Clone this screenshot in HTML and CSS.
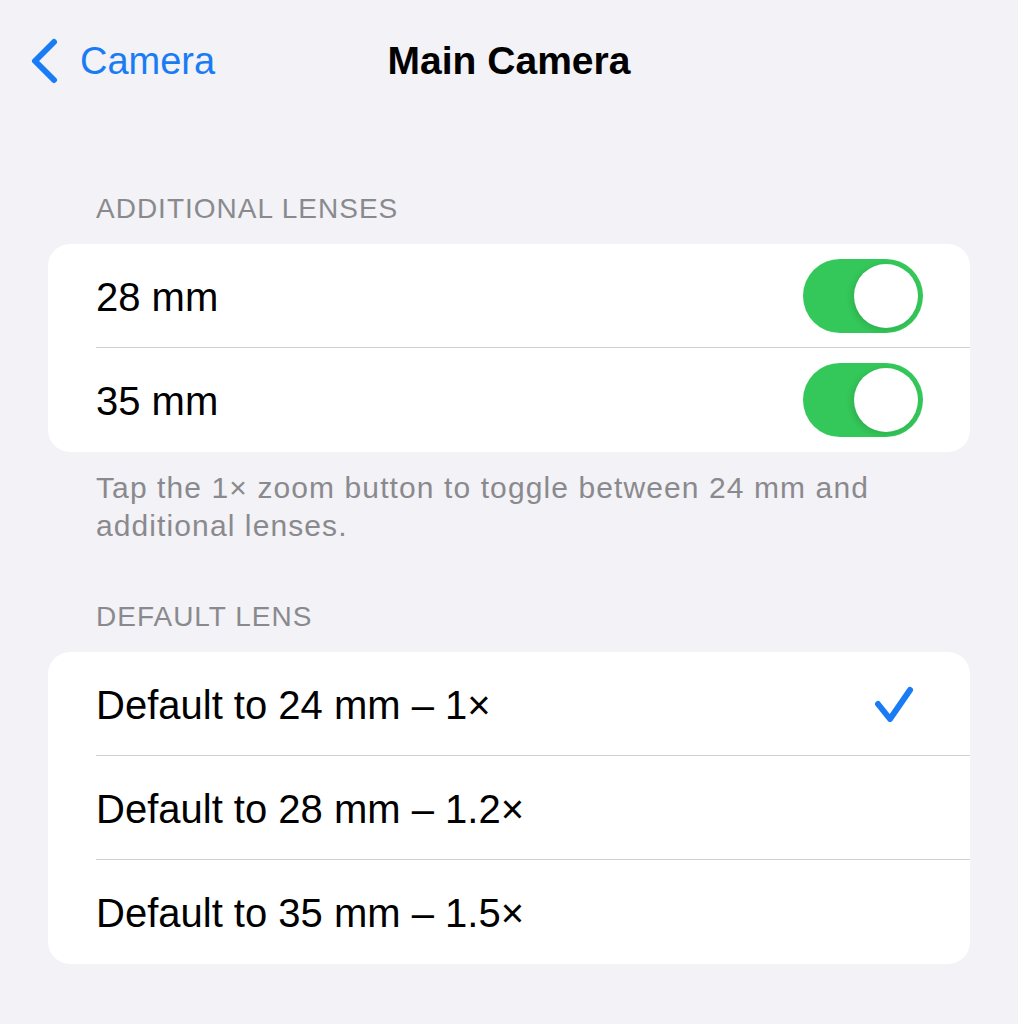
FILE: index.html
```html
<!DOCTYPE html>
<html lang="en">
<head>
    <meta charset="UTF-8">
    <meta name="viewport" content="width=device-width, initial-scale=1.0">
    <title>Main Camera</title>
    <link rel="stylesheet" href="styles.css">
</head>
<body>
<div class="nav">
    <a class="back" href="#">
        <svg class="chevron" width="28" height="46" viewBox="0 0 28 46">
            <polyline points="23,4 4,23 23,42" fill="none" stroke="#1a7cf5" stroke-width="6" stroke-linecap="round" stroke-linejoin="round"/>
        </svg>
        <span>Camera</span>
    </a>
    <div class="title">Main Camera</div>
    <div></div>
</div>

<div class="section-header">ADDITIONAL LENSES</div>
<div class="card">
    <div class="row">
        <span class="label">28 mm</span>
        <div class="toggle on"><div class="knob"></div></div>
    </div>
    <div class="row">
        <span class="label">35 mm</span>
        <div class="toggle on"><div class="knob"></div></div>
    </div>
</div>
<div class="section-footer">Tap the 1× zoom button to toggle between 24 mm and additional lenses.</div>

<div class="section-header second">DEFAULT LENS</div>
<div class="card">
    <div class="row check-row">
        <span class="label">Default to 24 mm – 1×</span>
        <svg class="check" width="40" height="36" viewBox="0 0 40 36">
            <polyline points="3,18 15,33 35,4" fill="none" stroke="#1a7cf5" stroke-width="6" stroke-linecap="round" stroke-linejoin="round"/>
        </svg>
    </div>
    <div class="row check-row">
        <span class="label">Default to 28 mm – 1.2×</span>
    </div>
    <div class="row check-row">
        <span class="label">Default to 35 mm – 1.5×</span>
    </div>
</div>
</body>
</html>
```

FILE: styles.css
```css
body {
    margin: 0;
    background: #f2f2f7;
    font-family: "Liberation Sans", Arial, sans-serif;
    color: #000;
}
.nav {
    height: 122px;
    display: grid;
    grid-template-columns: 1fr auto 1fr;
    align-items: center;
}
.back {
    display: flex;
    align-items: center;
    padding-left: 31px;
    gap: 21px;
    color: #1a7cf5;
    text-decoration: none;
    font-size: 38px;
}
.chevron { display: block; }
.title {
    font-size: 39px;
    font-weight: bold;
}
.section-header {
    margin-top: 69px;
    padding: 0 96px;
    font-size: 28px;
    line-height: 36px;
    letter-spacing: 1px;
    color: #8a8a8e;
    margin-bottom: 17px;
}
.section-header.second { margin-top: 54px; }
.card {
    margin: 0 48px;
    background: #fff;
    border-radius: 22px;
    overflow: hidden;
}
.row {
    height: 104px;
    margin-left: 48px;
    padding-right: 47px;
    display: flex;
    align-items: center;
    justify-content: space-between;
    font-size: 40px;
    border-bottom: 1px solid #d1d1d6;
    box-sizing: border-box;
}
.row:last-child { border-bottom: none; }
.label { padding-top: 3px; }
.check-row { padding-right: 55px; }
.check { display: block; }
.toggle {
    width: 120px;
    height: 74px;
    border-radius: 37px;
    background: #e9e9eb;
    padding: 5px;
    box-sizing: border-box;
    display: flex;
}
.toggle.on {
    background: #34c759;
    justify-content: flex-end;
}
.knob {
    width: 64px;
    height: 64px;
    border-radius: 50%;
    background: #fff;
    box-shadow: -2px 2px 6px rgba(0, 0, 0, 0.12);
}
.section-footer {
    padding: 17px 96px 0;
    font-size: 30px;
    line-height: 38px;
    letter-spacing: 1.1px;
    color: #8a8a8e;
}
```
